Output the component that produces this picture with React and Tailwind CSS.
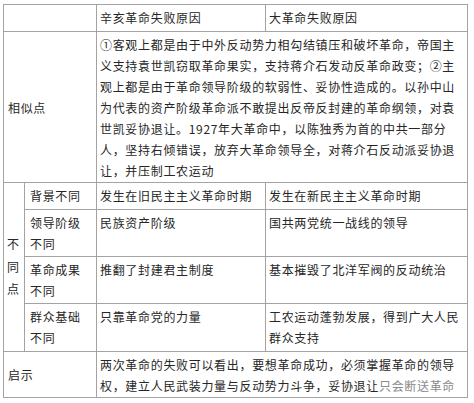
const FONT = { fontFamily: '"Noto Sans CJK SC", "Noto Sans", sans-serif' }

const SIMILAR = [
  '①客观上都是由于中外反动势力相勾结镇压和破坏革命，帝国主',
  '义支持袁世凯窃取革命果实，支持蒋介石发动反革命政变；②主',
  '观上都是由于革命领导阶级的软弱性、妥协性造成的。以孙中山',
  '为代表的资产阶级革命派不敢提出反帝反封建的革命纲领，对袁',
  '世凯妥协退让。1927年大革命中，以陈独秀为首的中共一部分',
  '人，坚持右倾错误，放弃大革命领导全，对蒋介石反动派妥协退',
  '让，并压制工农运动'
]

const DIFFS = [
  { label: ['背景不同'], a: ['发生在旧民主主义革命时期'], b: ['发生在新民主主义革命时期'], row: 'row-start-3' },
  { label: ['领导阶级', '不同'], a: ['民族资产阶级'], b: ['国共两党统一战线的领导'], row: 'row-start-4' },
  { label: ['革命成果', '不同'], a: ['推翻了封建君主制度'], b: ['基本摧毁了北洋军阀的反动统治'], row: 'row-start-5' },
  { label: ['群众基础', '不同'], a: ['只靠革命党的力量'], b: ['工农运动蓬勃发展，得到广大人民', '群众支持'], row: 'row-start-6' }
]

function Lines({ lines }) {
  return lines.map((l, i) => <div key={i} className="whitespace-nowrap">{l}</div>)
}

export default function App() {
  return (
    <div className="w-[474px] h-[403px] bg-white pl-[3px] pt-[4px] text-[12px] leading-[21px] tracking-[0.68px] text-[#262626]" style={FONT}>
      <div className="grid w-[465px] gap-px bg-[#a3a3a3] p-px grid-cols-[20px_71px_168px_201px] grid-rows-[26px_150px_26px_46px_46px_47px_45px]">
        {/* header */}
        <div className="col-span-2 bg-white" />
        <div className="bg-white pl-[3px] pt-[2px]">辛亥革命失败原因</div>
        <div className="bg-white pl-[3px] pt-[2px]">大革命失败原因</div>

        {/* similar */}
        <div className="col-span-2 bg-white pl-1 flex items-center">相似点</div>
        <div className="col-span-2 bg-white pl-[3px] pt-[2px]">
          <Lines lines={SIMILAR} />
        </div>

        {/* differences */}
        <div className="row-start-3 row-span-4 col-start-1 bg-white pl-[3px] flex flex-col justify-center leading-[22.5px]">
          <div>不</div>
          <div>同</div>
          <div>点</div>
        </div>
        {DIFFS.map((d, i) => (
          <div key={i} className="contents">
            <div className={`${d.row} col-start-2 bg-white pl-[5px] pt-[2px]`}><Lines lines={d.label} /></div>
            <div className={`${d.row} col-start-3 bg-white pl-[3px] pt-[2px]`}><Lines lines={d.a} /></div>
            <div className={`${d.row} col-start-4 bg-white pl-[3px] pt-[2px]`}><Lines lines={d.b} /></div>
          </div>
        ))}

        {/* lesson */}
        <div className="col-span-2 bg-white pl-1 flex items-center">启示</div>
        <div className="col-span-2 bg-white pl-[3px] pt-[2px]">
          <div className="whitespace-nowrap">两次革命的失败可以看出，要想革命成功，必须掌握革命的领导</div>
          <div className="whitespace-nowrap">权，建立人民武装力量与反动势力斗争，妥协退让<span className="text-[#8a8a8a]">只会断送革命</span></div>
        </div>
      </div>
    </div>
  )
}
